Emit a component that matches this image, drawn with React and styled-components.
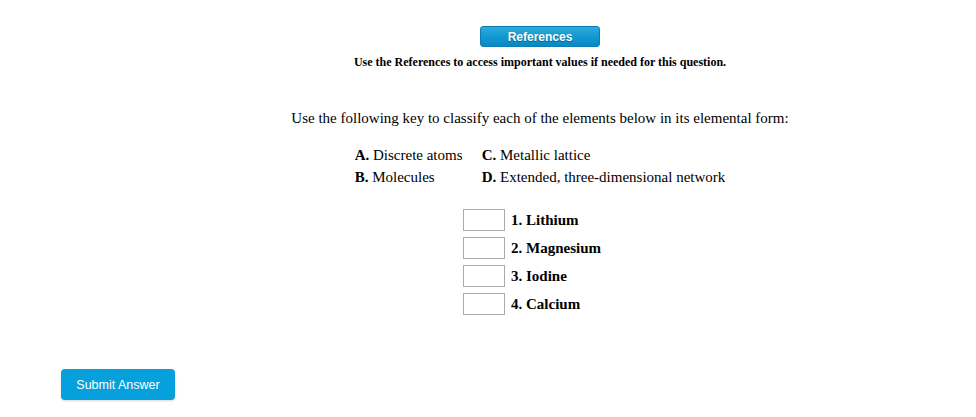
import React from "react";
import styled, { createGlobalStyle } from "styled-components";

const Global = createGlobalStyle`
  body {
    margin: 0;
    background: #fff;
    font-family: "Liberation Serif", "Times New Roman", serif;
    color: #000;
  }
`;

const Page = styled.div`
  width: 976px;
  height: 417px;
  display: flex;
  flex-direction: column;
  box-sizing: border-box;
  padding-top: 26px;
`;

const Question = styled.div`
  padding-left: 104px;
  display: flex;
  flex-direction: column;
  align-items: center;
`;

const RefButton = styled.button`
  width: 120px;
  height: 21px;
  border: 1px solid #0b7db3;
  border-radius: 3px;
  background: linear-gradient(#2cabdf 0%, #1499d2 50%, #0888c3 100%);
  color: #fff;
  font-family: "Liberation Sans", Arial, sans-serif;
  font-weight: bold;
  font-size: 12px;
  text-shadow: 0 1px 1px rgba(0, 0, 0, 0.35);
  padding: 0;
  cursor: pointer;
`;

const Notice = styled.p`
  margin: 8px 0 0;
  font-size: 12px;
  font-weight: bold;
`;

const Prompt = styled.p`
  margin: 40px 0 0;
  font-size: 15px;
`;

const KeyGrid = styled.div`
  margin-top: 20px;
  display: grid;
  grid-template-columns: 127px auto;
  row-gap: 5px;
  font-size: 15px;
  line-height: 17px;
`;

const Letter = styled.b`
  font-weight: bold;
`;

const Answers = styled.div`
  margin-top: 23px;
  display: flex;
  flex-direction: column;
  gap: 6px;
  margin-right: 16px;
`;

const AnswerRow = styled.label`
  display: flex;
  align-items: center;
  gap: 6px;
  font-size: 15px;
  font-weight: bold;
`;

const Box = styled.input`
  width: 42px;
  height: 22px;
  box-sizing: border-box;
  border: 1px solid #aaa;
  margin: 0;
  padding: 0;
`;

const Footer = styled.div`
  margin-top: auto;
  padding: 0 0 17px 61px;
`;

const Submit = styled.button`
  width: 114px;
  height: 31px;
  border: none;
  border-radius: 4px;
  background: #06a0dc;
  color: #fff;
  font-family: "Liberation Sans", Arial, sans-serif;
  font-size: 12.5px;
  box-shadow: 0 1px 2px rgba(0, 0, 0, 0.15);
  cursor: pointer;
`;

const keys = [
  ["A.", "Discrete atoms"],
  ["C.", "Metallic lattice"],
  ["B.", "Molecules"],
  ["D.", "Extended, three-dimensional network"],
];

const elements = ["1. Lithium", "2. Magnesium", "3. Iodine", "4. Calcium"];

export default function App() {
  return (
    <Page>
      <Global />
      <Question>
        <RefButton>References</RefButton>
        <Notice>Use the References to access important values if needed for this question.</Notice>
        <Prompt>Use the following key to classify each of the elements below in its elemental form:</Prompt>
        <KeyGrid>
          {keys.map(([l, t]) => (
            <div key={l}>
              <Letter>{l}</Letter> {t}
            </div>
          ))}
        </KeyGrid>
        <Answers>
          {elements.map((e) => (
            <AnswerRow key={e}>
              <Box type="text" />
              {e}
            </AnswerRow>
          ))}
        </Answers>
      </Question>
      <Footer>
        <Submit>Submit Answer</Submit>
      </Footer>
    </Page>
  );
}
